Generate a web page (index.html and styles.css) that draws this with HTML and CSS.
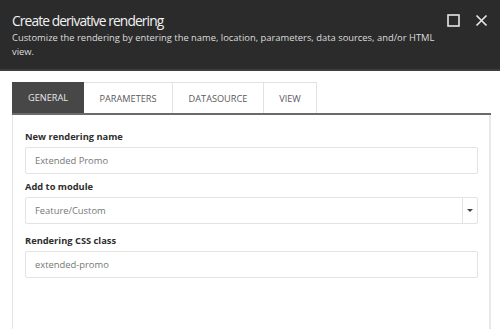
FILE: index.html
```html
<!DOCTYPE html>
<html>
<head>
<meta charset="utf-8">
<link rel="stylesheet" href="styles.css">
</head>
<body>
<div class="dialog">
  <header class="header">
    <div class="header-text">
      <h1 class="title">Create derivative rendering</h1>
      <p class="subtitle">Customize the rendering by entering the name, location, parameters, data sources, and/or HTML view.</p>
    </div>
    <div class="header-buttons">
      <svg class="hbtn" width="13" height="13" viewBox="0 0 13 13"><rect x="1" y="1" width="11" height="11" fill="none" stroke="#e6e6e6" stroke-width="1.6"/></svg>
      <svg class="hbtn" width="13" height="13" viewBox="0 0 13 13"><path d="M1.5 1.5 L11.5 11.5 M11.5 1.5 L1.5 11.5" stroke="#e6e6e6" stroke-width="1.7" fill="none"/></svg>
    </div>
  </header>
  <div class="body">
    <nav class="tabs">
      <div class="tab active">GENERAL</div>
      <div class="tab">PARAMETERS</div>
      <div class="tab">DATASOURCE</div>
      <div class="tab">VIEW</div>
      <div class="tab-fill"></div>
    </nav>
    <div class="panel">
      <div class="field">
        <label class="label">New rendering name</label>
        <div class="input">Extended Promo</div>
      </div>
      <div class="field">
        <label class="label">Add to module</label>
        <div class="select">
          <div class="select-value">Feature/Custom</div>
          <div class="select-btn"><span class="caret"></span></div>
        </div>
      </div>
      <div class="field field-last">
        <label class="label">Rendering CSS class</label>
        <div class="input">extended-promo</div>
      </div>
    </div>
  </div>
</div>
</body>
</html>
```
FILE: styles.css
```css
* { box-sizing: border-box; }
html, body { margin: 0; padding: 0; }
body {
  width: 500px;
  height: 329px;
  overflow: hidden;
  background: #fff;
  font-family: "Open Sans", "Liberation Sans", sans-serif;
}
.dialog { display: flex; flex-direction: column; height: 329px; }
.header {
  background: #2b2b2b;
  height: 71px;
  border-bottom: 2px solid #3d3d3d;
  display: flex;
  justify-content: space-between;
  padding: 11px 12px 0 12px;
}
.header-text { width: 430px; }
.title {
  margin: 0;
  color: #f2f2f2;
  font-size: 13.8px;
  font-weight: 400;
  letter-spacing: -0.9px;
  line-height: 20px;
}
.subtitle {
  margin: 0;
  color: #dcdcdc;
  font-size: 9.4px;
  line-height: 14px;
}
.header-buttons {
  display: flex;
  gap: 15px;
  padding-top: 3px;
}
.hbtn { display: block; }
.body {
  flex: 1;
  display: flex;
  flex-direction: column;
  padding: 11px 9px 0 12px;
}
.tabs {
  display: flex;
  height: 33px;
  border-bottom: 2px solid #6a6a6a;
}
.tab {
  height: 31px;
  display: flex;
  align-items: center;
  justify-content: center;
  font-size: 9.2px;
  color: #5a5a5a;
  border: 1px solid #e2e2e2;
  border-bottom: none;
  border-left: none;
}
.tab:nth-child(1) { width: 72px; }
.tab:nth-child(2) { width: 89px; }
.tab:nth-child(3) { width: 91px; }
.tab:nth-child(4) { width: 53px; }
.tab.active {
  background: #474747;
  color: #e8e8e8;
  border: none;
}
.tab-fill { flex: 1; }
.panel {
  flex: 1;
  border-left: 1px solid #e6e6e6;
  border-right: 2px solid #e8e8e8;
  padding: 16px 11px 0 12px;
  display: flex;
  flex-direction: column;
  gap: 7px;
}
.field { display: flex; flex-direction: column; }
.field-last { margin-top: 4px; }
.label {
  font-size: 9.3px;
  font-weight: 700;
  color: #2e2e2e;
  line-height: 12px;
  margin-bottom: 4px;
}
.input, .select {
  height: 27px;
  border: 1px solid #e3e3e3;
  border-radius: 2px;
  display: flex;
  align-items: center;
  font-size: 9.4px;
  color: #777;
}
.input { padding-left: 9px; }
.select-value { flex: 1; padding-left: 9px; }
.select-btn {
  width: 15px;
  height: 100%;
  border-left: 1px solid #e3e3e3;
  display: flex;
  align-items: center;
  justify-content: center;
}
.caret {
  width: 0; height: 0;
  border-left: 3px solid transparent;
  border-right: 3px solid transparent;
  border-top: 3px solid #444;
}
```
